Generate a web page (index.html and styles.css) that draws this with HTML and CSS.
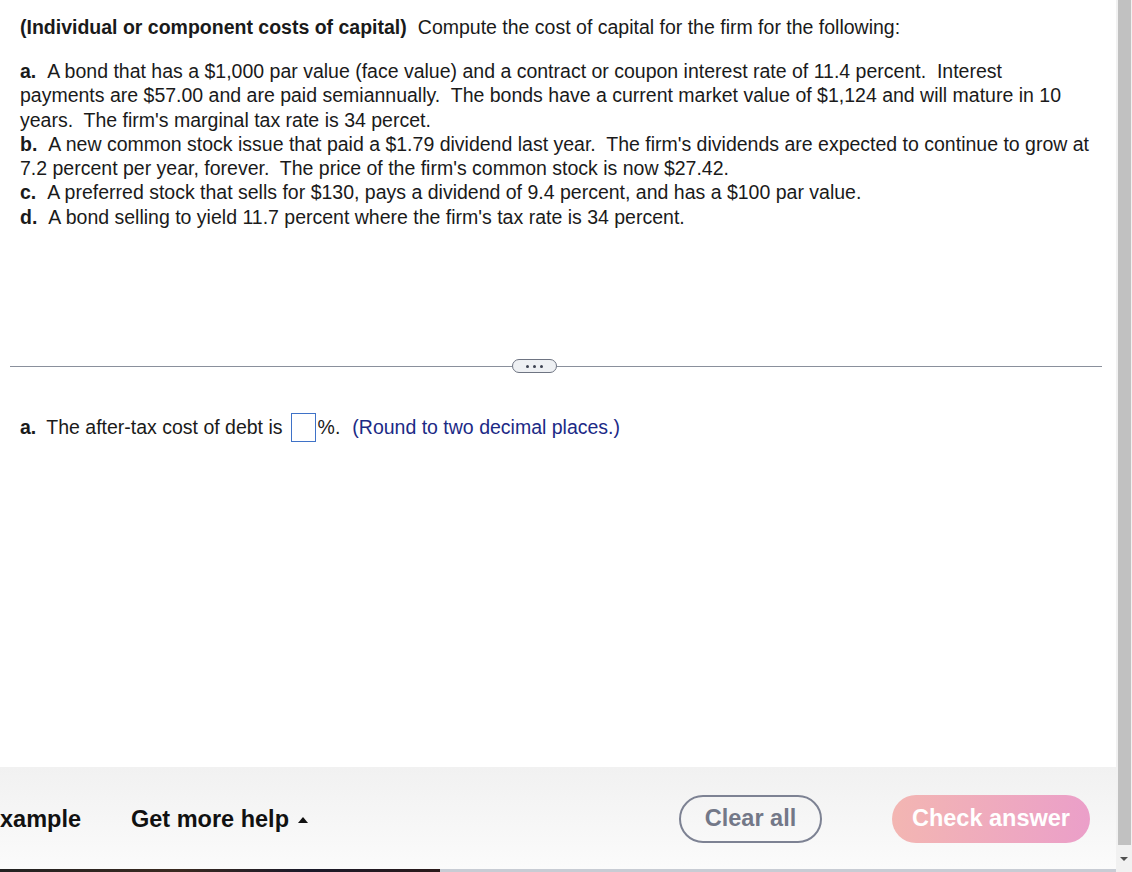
FILE: index.html
```html
<!DOCTYPE html>
<html>
<head>
<meta charset="utf-8">
<link rel="stylesheet" href="styles.css">
</head>
<body>
<div class="app">
  <div class="main">
    <div class="content">
      <p class="title"><b class="lead">(Individual or component costs of capital)</b>Compute the cost of capital for the firm for the following:</p>
      <div class="items">
        <p><b class="lbl">a.</b>A bond that has a $1,000 par value (face value) and a contract or coupon interest rate of 11.4 percent.&nbsp; Interest<br>payments are $57.00 and are paid semiannually.&nbsp; The bonds have a current market value of $1,124 and will mature in 10 years.&nbsp; The firm's marginal tax rate is 34 percet.</p>
        <p><b class="lbl">b.</b>A new common stock issue that paid a $1.79 dividend last year.&nbsp; The firm's dividends are expected to continue to grow at 7.2 percent per year, forever.&nbsp; The price of the firm's common stock is now $27.42.</p>
        <p><b class="lbl">c.</b>A preferred stock that sells for $130, pays a dividend of 9.4 percent, and has a $100 par value.</p>
        <p><b class="lbl">d.</b>A bond selling to yield 11.7 percent where the firm's tax rate is 34 percent.</p>
      </div>
      <div class="divider">
        <span class="line"></span>
        <span class="more"><i></i><i></i><i></i></span>
        <span class="line"></span>
      </div>
      <div class="answer"><b class="lbl">a.</b><span>The after-tax cost of debt is</span><span class="box"></span><span>%.</span><span class="hint">(Round to two decimal places.)</span></div>
    </div>
    <div class="footer">
      <div class="links">
        <span class="link example">xample</span>
        <span class="link">Get more help <span class="caret"></span></span>
      </div>
      <div class="buttons">
        <span class="btn clear">Clear all</span>
        <span class="btn check">Check answer</span>
      </div>
    </div>
    <div class="strip"><span class="dark"></span><span class="light"></span></div>
  </div>
  <div class="scrollbar">
    <div class="thumb"></div>
    <div class="arrow"></div>
  </div>
</div>
</body>
</html>
```
FILE: styles.css
```css
html, body {
  margin: 0;
  padding: 0;
  height: 100%;
  overflow: hidden;
}
body {
  font-family: "Liberation Sans", Arial, sans-serif;
  color: #1a1a1a;
  background: #fff;
}
.app {
  display: flex;
  height: 872px;
}
.main {
  flex: 1;
  display: flex;
  flex-direction: column;
  min-width: 0;
}
.content {
  flex: 1;
  padding: 15px 22px 0 20px;
}
p { margin: 0; }
.title {
  font-size: 19.5px;
  line-height: 24px;
}
.lead { margin-right: 11px; }
.lbl { margin-right: 11px; }
.items {
  margin-top: 20px;
  font-size: 19.5px;
  line-height: 24.3px;
}
.divider {
  display: flex;
  align-items: center;
  margin: 130px -8px 0 -10px;
}
.divider .line {
  flex: 1;
  height: 1px;
  background: #8a909c;
}
.divider .line:first-child { flex: 0 0 502px; }
.more {
  width: 43px;
  height: 12px;
  border: 1px solid #6e7482;
  border-radius: 7px;
  background: #eef0f3;
  display: flex;
  align-items: center;
  justify-content: center;
  gap: 4px;
}
.more i {
  width: 3px;
  height: 3px;
  border-radius: 50%;
  background: #3c4150;
}
.answer {
  margin-top: 39px;
  font-size: 19.5px;
  line-height: 30px;
  display: flex;
  align-items: center;
}
.answer .lbl { margin-right: 10px; }
.box {
  display: inline-block;
  width: 23px;
  height: 27px;
  border: 1px solid #3f72c7;
  margin: 0 2px 0 8px;
}
.hint { color: #1c2a86; margin-left: 12px; }
.footer {
  height: 102px;
  background: linear-gradient(#f1f1f1, #fbfbfb);
  display: flex;
  align-items: center;
  justify-content: space-between;
  padding: 0 26px 0 0;
}
.links {
  display: flex;
  gap: 50px;
  font-weight: bold;
  font-size: 23.5px;
  color: #111;
  margin-top: 3px;
}
.caret {
  display: inline-block;
  width: 0;
  height: 0;
  border-left: 5px solid transparent;
  border-right: 5px solid transparent;
  border-bottom: 6px solid #111;
  vertical-align: 4px;
  margin-left: 2px;
}
.buttons {
  display: flex;
  gap: 70px;
  margin-top: 1px;
}
.btn {
  height: 48px;
  border-radius: 25px;
  font-weight: bold;
  font-size: 23.5px;
  display: flex;
  align-items: center;
  justify-content: center;
  box-sizing: border-box;
}
.clear {
  width: 143px;
  border: 2px solid #7d8293;
  color: #737888;
}
.check {
  width: 198px;
  color: #fff;
  background: linear-gradient(90deg, #f3b6b2, #eb9fc9);
}
.strip {
  height: 3px;
  display: flex;
}
.strip .dark {
  width: 440px;
  background: linear-gradient(90deg, #222, #3a2a20 40%, #1a1a2a 70%, #2a1a1a);
}
.strip .light {
  flex: 1;
  background: #c8ccd4;
}
.scrollbar {
  width: 16px;
  background: #f1f1f1;
  display: flex;
  flex-direction: column;
  align-items: center;
}
.thumb {
  width: 13px;
  margin-left: 1px;
  height: 845px;
  background: #c1c1c1;
}
.arrow {
  margin-top: 12px;
  width: 0;
  height: 0;
  border-left: 4px solid transparent;
  border-right: 4px solid transparent;
  border-top: 4px solid #505050;
}
```
